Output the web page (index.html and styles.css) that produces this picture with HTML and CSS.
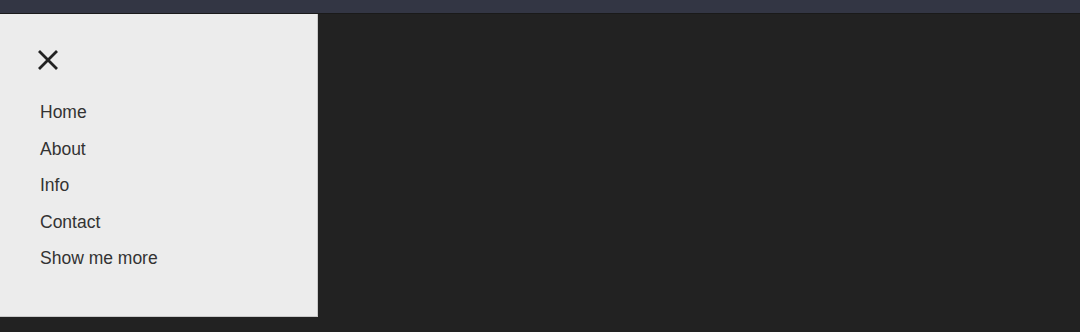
FILE: index.html
```html
<!DOCTYPE html>
<html>
<head>
<meta charset="utf-8">
<link rel="stylesheet" href="styles.css">
</head>
<body>
<div class="topbar"></div>
<aside class="sidenav">
  <button class="close" aria-label="Close">
    <svg width="22" height="22" viewBox="0 0 22 22"><path d="M2 2 L20 20 M20 2 L2 20" stroke="#222" stroke-width="2.8" fill="none"/></svg>
  </button>
  <nav class="links">
    <a href="#">Home</a>
    <a href="#">About</a>
    <a href="#">Info</a>
    <a href="#">Contact</a>
    <a href="#">Show me more</a>
  </nav>
</aside>
</body>
</html>
```
FILE: styles.css
```css
html, body {
  margin: 0;
  padding: 0;
  background: #222222;
  height: 100%;
  overflow: hidden;
}
.topbar {
  height: 13px;
  background: #333644;
  border-bottom: 1px solid #1a1a1a;
}
.sidenav {
  box-sizing: border-box;
  width: 318px;
  height: 303px;
  background: #ececec;
  border-right: 1px solid #c9c9c9;
  border-bottom: 1px solid #c9c9c9;
  padding: 35px 0 0 37px;
  display: flex;
  flex-direction: column;
  font-family: "Liberation Sans", Arial, sans-serif;
}
.close {
  width: 22px;
  height: 22px;
  padding: 0;
  margin: 0 0 23px 0;
  border: 0;
  background: none;
  display: block;
}
.close svg {
  display: block;
}
.links {
  display: flex;
  flex-direction: column;
  padding-left: 3px;
}
.links a {
  display: block;
  font-size: 17.5px;
  line-height: 20.5px;
  padding: 8px 0;
  color: #333;
  text-decoration: none;
}
```
